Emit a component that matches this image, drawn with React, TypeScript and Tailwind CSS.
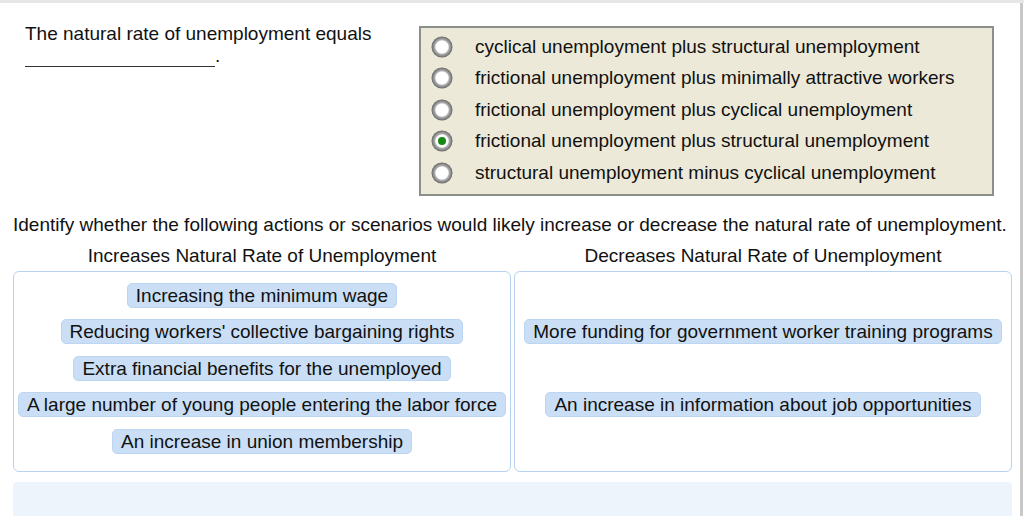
import React from 'react';

const options = [
  'cyclical unemployment plus structural unemployment',
  'frictional unemployment plus minimally attractive workers',
  'frictional unemployment plus cyclical unemployment',
  'frictional unemployment plus structural unemployment',
  'structural unemployment minus cyclical unemployment',
];

const increases: (string | null)[] = [
  'Increasing the minimum wage',
  "Reducing workers' collective bargaining rights",
  'Extra financial benefits for the unemployed',
  'A large number of young people entering the labor force',
  'An increase in union membership',
];

const decreases: (string | null)[] = [
  null,
  'More funding for government worker training programs',
  null,
  'An increase in information about job opportunities',
  null,
];

const Radio: React.FC<{ checked?: boolean }> = ({ checked }) => (
  <svg width="22" height="22" viewBox="0 0 22 22" className="shrink-0">
    <defs>
      <radialGradient id="ring" cx="50%" cy="50%" r="50%">
        <stop offset="55%" stopColor="#e8e8e8" />
        <stop offset="72%" stopColor="#a8a8a8" />
        <stop offset="100%" stopColor="#666666" />
      </radialGradient>
    </defs>
    <circle cx="11" cy="11" r="10.5" fill="url(#ring)" />
    <circle cx="11" cy="11" r="6.5" fill="#ffffff" />
    {checked && <circle cx="11" cy="11" r="4" fill="#148a14" />}
  </svg>
);

const Chip: React.FC<{ text: string | null }> = ({ text }) => (
  <div className="h-[36.5px] flex items-center justify-center">
    {text && (
      <span className="bg-[#cadff5] border border-[#bcd6f1] rounded-[5px] px-[8px] h-[25px] leading-[23px] text-[19px] text-[#111] whitespace-nowrap">
        {text}
      </span>
    )}
  </div>
);

export default function App() {
  return (
    <div
      className="w-[1024px] h-[516px] overflow-hidden bg-white border-t-[3px] border-[#e6e6e6] flex"
      style={{ fontFamily: '"Liberation Sans", Arial, sans-serif' }}
    >
      <div className="w-[1020px] flex flex-col text-[#111]">
        <div className="flex pt-[20px] h-[196px]">
          <div className="w-[419px] pl-[25px] text-[19px] leading-[22px]">
            <div>The natural rate of unemployment equals</div>
            <div className="flex items-end">
              <span className="inline-block w-[190px] border-b border-[#333] h-[10px]" />
              <span>.</span>
            </div>
          </div>
          <div className="w-[575px] h-[170px] mt-[3px] bg-[#ece9d9] border-2 border-[#8b908b] pl-[10px] pt-[3px]">
            {options.map((o, i) => (
              <div key={i} className="flex items-center h-[31.5px]">
                <Radio checked={i === 3} />
                <span className="ml-[22px] text-[19px] whitespace-nowrap">{o}</span>
              </div>
            ))}
          </div>
        </div>
        <div className="pl-[13px] text-[19px] leading-[22px] mt-[18px] whitespace-nowrap">
          Identify whether the following actions or scenarios would likely increase or decrease the natural rate of unemployment.
        </div>
        <div className="flex pl-[13px] mt-[9px] gap-[3px]">
          <div className="w-[498px] text-center text-[19px] leading-[22px]">Increases Natural Rate of Unemployment</div>
          <div className="w-[498px] text-center text-[19px] leading-[22px]">Decreases Natural Rate of Unemployment</div>
        </div>
        <div className="flex pl-[13px] mt-[4px] gap-[3px]">
          <div className="w-[498px] h-[201px] border border-[#b6d2f0] rounded-[6px] pt-[5px]">
            {increases.map((t, i) => (
              <Chip key={i} text={t} />
            ))}
          </div>
          <div className="w-[498px] h-[201px] border border-[#b6d2f0] rounded-[6px] pt-[5px]">
            {decreases.map((t, i) => (
              <Chip key={i} text={t} />
            ))}
          </div>
        </div>
        <div className="ml-[13px] mt-[10px] w-[999px] h-[40px] bg-[#eef4fb] rounded-t-[4px]" />
      </div>
      <div className="w-[3px] h-full bg-[#c8c8c8]" />
      <div className="w-[1px] h-full bg-white" />
    </div>
  );
}
